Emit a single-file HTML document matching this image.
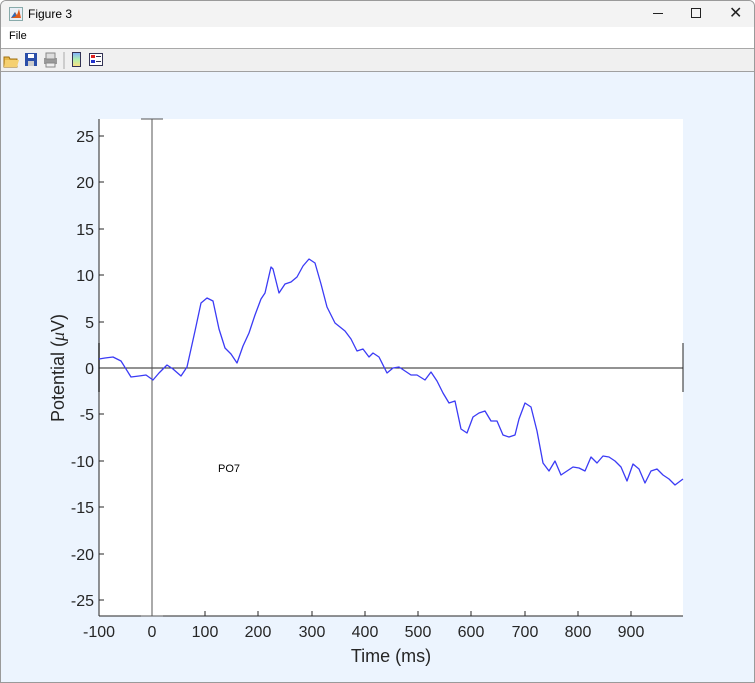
<!DOCTYPE html><html><head><style>
body{margin:0;width:755px;height:683px;overflow:hidden;font-family:"Liberation Sans",sans-serif;background:#fff}
.win{position:absolute;left:0;top:0;width:753px;height:681px;border:1px solid #9a9a9a;border-radius:6px 6px 0 0;overflow:hidden;background:#ecf4fe}
.title{position:absolute;left:0;top:0;width:100%;height:26px;background:#f3f3f3}
.menu{position:absolute;left:0;top:26px;width:100%;height:21px;background:#fff;border-bottom:1px solid #a8a8a8}
.tool{position:absolute;left:0;top:48px;width:100%;height:22px;background:#f0f0f0;border-bottom:1px solid #a0a0a0}
</style></head><body><div class="win">
<div class="title"><svg style="position:absolute;left:8px;top:6px" width="14" height="14"><rect x="0.5" y="0.5" width="13" height="13" fill="#e8eef6" stroke="#8aa"/><path d="M2 11 L6 5 L8 8 L10 2 L12 11Z" fill="#e05a1a"/><path d="M2 11 L6 5 L7 9Z" fill="#2a6cc0"/></svg>
<span style="position:absolute;left:27px;top:6px;font-size:12px;color:#000">Figure 3</span>
<span style="position:absolute;left:652px;top:12px;width:10px;height:1px;background:#222"></span>
<span style="position:absolute;left:690px;top:7px;width:8px;height:8px;border:1px solid #222"></span>
<span style="position:absolute;left:728px;top:2px;font-size:16px;color:#222">✕</span></div>
<div class="menu"><span style="position:absolute;left:8px;top:3px;font-size:11px;color:#000">File</span></div>
<div class="tool"><svg width="120" height="22">
<path d="M3 8h5l1 2h7v8H3z" fill="#e8b84a" stroke="#a07010"/><path d="M4 11h14l-2 7H3z" fill="#f5d070"/>
<rect x="24" y="4" width="12" height="13" fill="#2a4ea8"/><rect x="27" y="5" width="6" height="4" fill="#fff"/><rect x="27" y="12" width="6" height="5" fill="#ccc"/>
<rect x="43" y="9" width="13" height="6" fill="#999"/><rect x="45" y="4" width="9" height="6" fill="#ddd" stroke="#888"/><rect x="45" y="14" width="9" height="4" fill="#eee" stroke="#888"/>
<line x1="63" y1="3" x2="63" y2="20" stroke="#aaa"/>
<rect x="71.5" y="3.5" width="8" height="14" fill="url(#g)" stroke="#335"/>
<defs><linearGradient id="g" x1="0" y1="0" x2="0" y2="1"><stop offset="0" stop-color="#7fb0ff"/><stop offset=".5" stop-color="#b0f0b0"/><stop offset="1" stop-color="#ffe080"/></linearGradient></defs>
<rect x="88.5" y="4.5" width="13" height="12" fill="#fff" stroke="#335"/><rect x="90" y="6" width="4" height="3" fill="#d22"/><rect x="90" y="11" width="4" height="3" fill="#23c"/><rect x="95" y="7" width="5" height="1" fill="#335"/><rect x="95" y="12" width="5" height="1" fill="#335"/>
</svg></div>
<svg style="position:absolute;left:0;top:0" width="755" height="683">
<rect x="98" y="118" width="584" height="497" fill="#fff"/>
<g stroke="#262626" stroke-width="1" fill="none">
<line x1="98" y1="118" x2="98" y2="615"/>
<line x1="98" y1="615" x2="682" y2="615"/>
<line x1="98" y1="367" x2="682" y2="367"/>
<line x1="151" y1="118" x2="151" y2="615" stroke="#555"/>
<line x1="140" y1="118" x2="162" y2="118" stroke="#555"/><line x1="140" y1="615" x2="162" y2="615" stroke="#555"/>
<line x1="682" y1="342" x2="682" y2="391"/><line x1="98" y1="342" x2="98" y2="391" stroke-width="1.5"/>
</g>
<g stroke="#262626">
<line x1="98" y1="135" x2="103" y2="135"/><line x1="98" y1="181" x2="103" y2="181"/><line x1="98" y1="228" x2="103" y2="228"/><line x1="98" y1="274" x2="103" y2="274"/><line x1="98" y1="321" x2="103" y2="321"/><line x1="98" y1="413" x2="103" y2="413"/><line x1="98" y1="460" x2="103" y2="460"/><line x1="98" y1="506" x2="103" y2="506"/><line x1="98" y1="553" x2="103" y2="553"/><line x1="98" y1="599" x2="103" y2="599"/>
<line x1="204" y1="615" x2="204" y2="610"/><line x1="257" y1="615" x2="257" y2="610"/><line x1="311" y1="615" x2="311" y2="610"/><line x1="364" y1="615" x2="364" y2="610"/><line x1="417" y1="615" x2="417" y2="610"/><line x1="470" y1="615" x2="470" y2="610"/><line x1="524" y1="615" x2="524" y2="610"/><line x1="577" y1="615" x2="577" y2="610"/><line x1="630" y1="615" x2="630" y2="610"/>
</g>
<g font-size="16" fill="#262626" text-anchor="end" font-family="Liberation Sans">
<text x="93" y="141">25</text><text x="93" y="187">20</text><text x="93" y="234">15</text><text x="93" y="280">10</text><text x="93" y="327">5</text><text x="93" y="373">0</text><text x="93" y="419">-5</text><text x="93" y="466">-10</text><text x="93" y="512">-15</text><text x="93" y="559">-20</text><text x="93" y="605">-25</text>
</g>
<g font-size="16" fill="#262626" text-anchor="middle" font-family="Liberation Sans">
<text x="98" y="636">-100</text><text x="151" y="636">0</text><text x="204" y="636">100</text><text x="257" y="636">200</text><text x="311" y="636">300</text><text x="364" y="636">400</text><text x="417" y="636">500</text><text x="470" y="636">600</text><text x="524" y="636">700</text><text x="577" y="636">800</text><text x="630" y="636">900</text>
<text x="390" y="661" font-size="18">Time (ms)</text>
<text transform="translate(63,367) rotate(-90)" font-size="18">Potential (<tspan font-style="italic" font-family="Liberation Serif">μ</tspan>V)</text>
</g>
<text x="217" y="471" font-size="11" fill="#000" font-family="Liberation Sans">PO7</text>
<polyline fill="none" stroke="#3b3bf5" stroke-width="1.3" stroke-linejoin="round" points="98,358 104,357 112,356 120,360 130,376 138,375 145,374 152,379 158,372 166,364 172,368 180,375 186,366 194,330 200,302 206,297 212,300 218,328 224,347 230,353 236,362 242,345 248,332 254,314 260,298 264,292 270,266 272,268 278,292 284,283 290,281 296,276 302,265 308,258 314,262 320,283 326,306 334,322 344,330 350,338 356,350 362,348 368,356 372,352 378,356 386,372 392,367 398,366 404,370 410,374 416,374 424,379 430,371 436,380 442,392 448,402 454,400 460,428 466,432 472,416 478,412 484,410 490,420 496,420 502,434 508,436 514,434 518,418 524,402 530,406 536,430 542,462 548,470 554,460 560,474 566,470 572,466 578,467 584,470 590,456 596,462 602,455 608,456 614,460 620,466 626,480 632,463 638,468 644,482 650,470 656,468 662,474 668,478 674,484 682,478"/>
</svg>
</div></body></html>
